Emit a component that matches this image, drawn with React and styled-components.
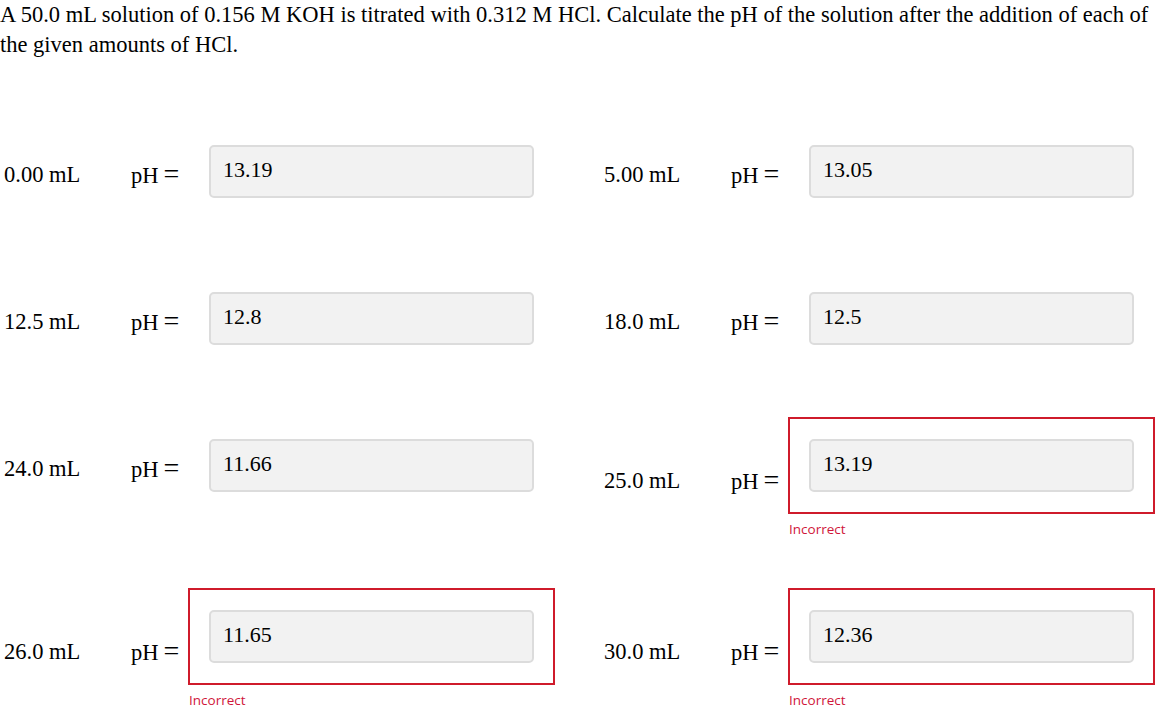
import React from "react";
import styled, { createGlobalStyle } from "styled-components";

const GlobalStyle = createGlobalStyle`
  html, body {
    margin: 0;
    padding: 0;
    background: #fff;
  }
  body {
    font-family: "Liberation Serif", "Times New Roman", serif;
    font-size: 22.5px;
    color: #000;
  }
`;

const Page = styled.div`
  width: 1158px;
`;

const Prompt = styled.p`
  margin: 0;
  line-height: 30px;
`;

const Grid = styled.div`
  display: grid;
  grid-template-columns: 600px 1fr;
  row-gap: 50px;
  align-items: start;
  margin-top: 63px;
`;

const Cell = styled.div`
  display: flex;
  align-items: center;
`;

const Volume = styled.span`
  width: 127px;
  padding-left: 4px;
  padding-top: 6px;
  white-space: nowrap;
`;

const Equals = styled.span`
  width: 57px;
  padding-top: 6px;
  line-height: 27px;
  white-space: nowrap;
`;

const EqualSign = styled.span`
  margin-left: 5px;
  font-size: 28px;
`;

const Field = styled.div`
  display: flex;
  flex-direction: column;
`;

const Frame = styled.div`
  border: 2px solid ${(p) => (p.$wrong ? "#cf1b2b" : "transparent")};
  padding: 20px 19px;
`;

const AnswerBox = styled.div`
  box-sizing: border-box;
  width: 325px;
  height: 53px;
  padding: 9px 12px 0;
  font-size: 22px;
  line-height: 27px;
  background: #f2f2f2;
  border: 2px solid #dcdcdc;
  border-radius: 5px;
`;

const Feedback = styled.span`
  margin-top: 6px;
  padding-left: 1px;
  font-family: "Open Sans", "Noto Sans", sans-serif;
  font-size: 13.5px;
  color: #d0163a;
`;

const answers = [
  { volume: "0.00 mL", value: "13.19" },
  { volume: "5.00 mL", value: "13.05" },
  { volume: "12.5 mL", value: "12.8" },
  { volume: "18.0 mL", value: "12.5" },
  { volume: "24.0 mL", value: "11.66" },
  { volume: "25.0 mL", value: "13.19", wrong: true },
  { volume: "26.0 mL", value: "11.65", wrong: true },
  { volume: "30.0 mL", value: "12.36", wrong: true },
];

const Answer = ({ volume, value, wrong }) => (
  <Cell>
    <Volume>{volume}</Volume>
    <Equals>
      pH<EqualSign>=</EqualSign>
    </Equals>
    <Field>
      <Frame $wrong={wrong}>
        <AnswerBox>{value}</AnswerBox>
      </Frame>
      {wrong && <Feedback>Incorrect</Feedback>}
    </Field>
  </Cell>
);

export default function App() {
  return (
    <Page>
      <GlobalStyle />
      <Prompt>
        A 50.0 mL solution of 0.156 M KOH is titrated with 0.312 M HCl.
        Calculate the pH of the solution after the addition of each of the
        given amounts of HCl.
      </Prompt>
      <Grid>
        {answers.map((a) => (
          <Answer key={a.volume} {...a} />
        ))}
      </Grid>
    </Page>
  );
}
